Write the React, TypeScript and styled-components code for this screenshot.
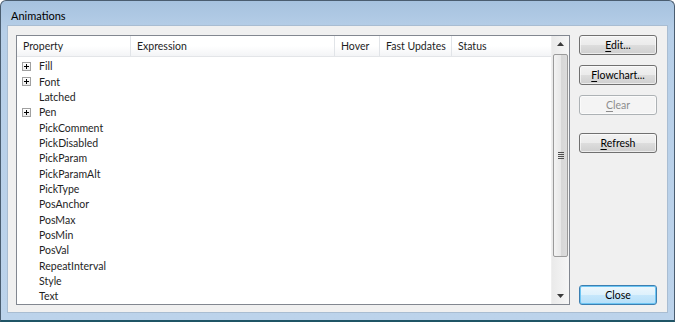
import { createGlobalStyle } from "styled-components";
import styled from "styled-components";

const Global = createGlobalStyle`
  html, body {
    margin: 0;
    padding: 0;
    background: #ffffff;
  }
  body {
    font-family: "Segoe UI", Lato, "Liberation Sans", sans-serif;
    font-size: 10.5px;
    color: #000;
  }
`;

const Window = styled.div`
  width: 675px;
  height: 322px;
  box-sizing: border-box;
  border: 1px solid #4a5d70;
  border-bottom: 2px solid #1f5566;
  border-radius: 6px 6px 0 0;
  background: linear-gradient(180deg, #a6c2df 0px, #b7cfe8 30px, #bcd3eb 100%);
  display: flex;
  flex-direction: column;
  overflow: hidden;
`;

const TitleBar = styled.div`
  height: 26px;
  box-sizing: border-box;
  padding: 6px 0 0 10px;
  display: flex;
  align-items: center;
  font-size: 11px;
  color: #000;
`;

const Client = styled.div`
  margin: 0 6px 7px 6px;
  flex: 1;
  background: #f0f0f0;
  border: 1px solid #a9bdd2;
  display: flex;
  padding: 9px 9px 7px 8px;
  gap: 9px;
`;

const ListBox = styled.div`
  width: 554px;
  box-sizing: border-box;
  border: 1px solid #828790;
  background: #fff;
  display: flex;
`;

const ListMain = styled.div`
  flex: 1;
  display: flex;
  flex-direction: column;
  min-width: 0;
`;

const Header = styled.div`
  height: 20px;
  display: flex;
  background: linear-gradient(180deg, #ffffff 0%, #ffffff 50%, #f3f4f6 100%);
  border-bottom: 1px solid #e3e5e8;
`;

const HeaderCell = styled.div<{ $w: number }>`
  width: ${(p) => p.$w}px;
  box-sizing: border-box;
  padding: 1px 0 0 6px;
  display: flex;
  align-items: center;
  white-space: nowrap;
  border-right: 1px solid #e1e4e8;
  color: #1e1e1e;
  &:last-child {
    flex: 1;
    border-right: none;
  }
`;

const Rows = styled.div`
  padding-top: 2px;
`;

const Row = styled.div`
  height: 15.33px;
  display: flex;
  align-items: center;
  padding-left: 5px;
  color: #1e1e1e;
  white-space: nowrap;
`;

const Expander = styled.span<{ $show: boolean }>`
  width: 9px;
  height: 9px;
  box-sizing: border-box;
  margin-right: 8px;
  border: 1px solid ${(p) => (p.$show ? "#a0a0a0" : "transparent")};
  background: ${(p) => (p.$show ? "linear-gradient(180deg,#ffffff,#eaeaea)" : "none")};
  position: relative;
  flex-shrink: 0;
  &::before,
  &::after {
    content: "";
    display: ${(p) => (p.$show ? "block" : "none")};
    position: absolute;
    background: #000;
  }
  &::before {
    left: 1px;
    top: 3px;
    width: 5px;
    height: 1px;
  }
  &::after {
    left: 3px;
    top: 1px;
    width: 1px;
    height: 5px;
  }
`;

const ScrollBar = styled.div`
  width: 17px;
  background: linear-gradient(90deg, #eaeaea, #f6f6f6);
  display: flex;
  flex-direction: column;
  align-items: center;
  border-left: 1px solid #efefef;
`;

const Arrow = styled.div`
  height: 17px;
  width: 17px;
  display: flex;
  align-items: center;
  justify-content: center;
`;

const Thumb = styled.div`
  width: 15px;
  height: 203px;
  box-sizing: border-box;
  border: 1px solid #9a9a9a;
  border-radius: 2px;
  background: linear-gradient(90deg, #f3f3f3 0%, #e8e8e8 50%, #d6d6d6 51%, #dcdcdc 100%);
  display: flex;
  align-items: center;
  justify-content: center;
  margin-top: 1px;
`;

const Grip = styled.div`
  width: 6px;
  display: flex;
  flex-direction: column;
  gap: 1px;
  span {
    height: 1px;
    background: #505050;
  }
`;

const Buttons = styled.div`
  width: 78px;
  display: flex;
  flex-direction: column;
`;

const Button = styled.div<{ $gap?: number; $disabled?: boolean; $default?: boolean }>`
  height: 20px;
  box-sizing: border-box;
  margin-top: ${(p) => p.$gap ?? 0}px;
  border: 1px solid
    ${(p) => (p.$default ? "#3c7fb1" : p.$disabled ? "#adb2b5" : "#707070")};
  border-radius: 3px;
  background: ${(p) =>
    p.$default
      ? "linear-gradient(180deg,#edf7fd 0%,#ddf1fc 50%,#c6e7fb 51%,#b5dff9 100%)"
      : p.$disabled
      ? "#f4f4f4"
      : "linear-gradient(180deg,#f2f2f2 0%,#ebebeb 50%,#dddddd 51%,#cfcfcf 100%)"};
  box-shadow: ${(p) => (p.$default ? "inset 0 0 0 1px #6cc5f3" : "inset 0 0 0 1px rgba(255,255,255,0.6)")};
  display: flex;
  align-items: center;
  justify-content: center;
  color: ${(p) => (p.$disabled ? "#8d8d8d" : "#000")};
  u {
    text-decoration: underline;
    text-underline-offset: 2px;
  }
`;

const Spacer = styled.div`
  flex: 1;
`;

const columns: [string, number][] = [
  ["Property", 114],
  ["Expression", 204],
  ["Hover", 45],
  ["Fast Updates", 72],
  ["Status", 0],
];

const props: [string, boolean][] = [
  ["Fill", true],
  ["Font", true],
  ["Latched", false],
  ["Pen", true],
  ["PickComment", false],
  ["PickDisabled", false],
  ["PickParam", false],
  ["PickParamAlt", false],
  ["PickType", false],
  ["PosAnchor", false],
  ["PosMax", false],
  ["PosMin", false],
  ["PosVal", false],
  ["RepeatInterval", false],
  ["Style", false],
  ["Text", false],
];

export default function App() {
  return (
    <>
      <Global />
      <Window>
        <TitleBar>Animations</TitleBar>
        <Client>
          <ListBox>
            <ListMain>
              <Header>
                {columns.map(([name, w]) => (
                  <HeaderCell key={name} $w={w}>
                    {name}
                  </HeaderCell>
                ))}
              </Header>
              <Rows>
                {props.map(([name, exp]) => (
                  <Row key={name}>
                    <Expander $show={exp} />
                    {name}
                  </Row>
                ))}
              </Rows>
            </ListMain>
            <ScrollBar>
              <Arrow>
                <svg width="7" height="4" viewBox="0 0 7 4">
                  <path d="M0 4 L3.5 0 L7 4 Z" fill="#3a3a3a" />
                </svg>
              </Arrow>
              <Thumb>
                <Grip>
                  <span />
                  <span />
                  <span />
                  <span />
                </Grip>
              </Thumb>
              <Spacer />
              <Arrow>
                <svg width="7" height="4" viewBox="0 0 7 4">
                  <path d="M0 0 L7 0 L3.5 4 Z" fill="#3a3a3a" />
                </svg>
              </Arrow>
            </ScrollBar>
          </ListBox>
          <Buttons>
            <Button>
              <span>
                <u>E</u>dit...
              </span>
            </Button>
            <Button $gap={10}>
              <span>
                <u>F</u>lowchart...
              </span>
            </Button>
            <Button $gap={10} $disabled>
              <span>
                <u>C</u>lear
              </span>
            </Button>
            <Button $gap={18}>
              <span>
                <u>R</u>efresh
              </span>
            </Button>
            <Spacer />
            <Button $default>Close</Button>
          </Buttons>
        </Client>
      </Window>
    </>
  );
}
